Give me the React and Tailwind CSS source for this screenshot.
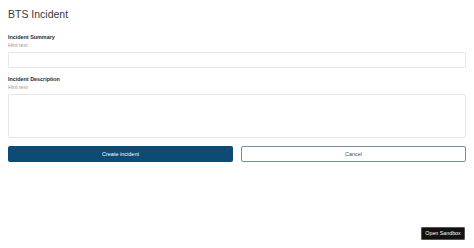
export default function App() {
  return (
    <div className="relative min-h-[248px] w-full bg-white px-2 pt-2 text-[#333]" style={{ fontFamily: '"Liberation Sans", Arial, sans-serif' }}>
      <h1 className="text-[10.5px] leading-[12px] font-normal text-[#3a3a3a]">BTS Incident</h1>

      <div className="mt-[13px]">
        <div className="text-[5.4px] leading-[8px] font-bold text-[#2a2a2a]">Incident Summary</div>
        <div className="text-[5.4px] leading-[8px] text-[#999]">Hint text</div>
        <input className="mt-[3px] block h-[16px] w-full rounded-[2px] border border-[#e6e6e6] bg-white outline-none" />
      </div>

      <div className="mt-[7px]">
        <div className="text-[5.4px] leading-[8px] font-bold text-[#2a2a2a]">Incident Description</div>
        <div className="text-[5.4px] leading-[8px] text-[#999]">Hint text</div>
        <textarea className="mt-[3px] block h-[44px] w-full resize-none rounded-[2px] border border-[#e6e6e6] bg-white outline-none" />
      </div>

      <div className="mt-[8px] grid grid-cols-2 gap-2">
        <button className="flex h-[16px] items-center justify-center rounded-[2px] bg-[#0e4b74] text-[5.5px] text-white">Create incident</button>
        <button className="flex h-[16px] items-center justify-center rounded-[2px] border border-[#7590a3] bg-white text-[5.5px] text-[#3b566a]">Cancel</button>
      </div>

      <div className="absolute left-[421px] top-[227px] flex h-[13px] w-[44px] items-center justify-center rounded-[1px] border border-[#555] bg-[#111] text-[5.3px] text-white">Open Sandbox</div>
    </div>
  );
}
